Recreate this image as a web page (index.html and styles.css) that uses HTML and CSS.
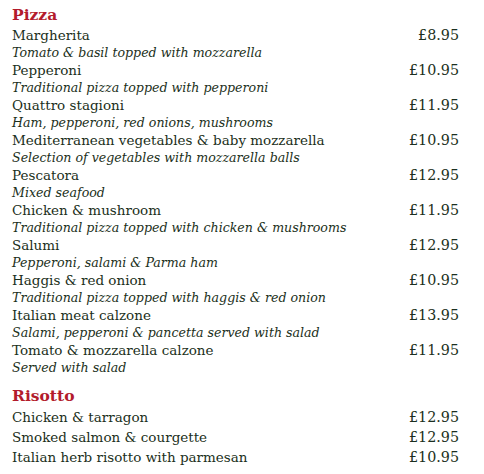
FILE: index.html
```html
<!DOCTYPE html>
<html lang="en">
<head>
<meta charset="utf-8">
<link rel="stylesheet" href="styles.css">
</head>
<body>
<div class="menu">
  <h2 class="section">Pizza</h2>
  <div class="item"><div class="row"><span class="name">Margherita</span><span class="price">£8.95</span></div><div class="desc">Tomato &amp; basil topped with mozzarella</div></div>
  <div class="item"><div class="row"><span class="name">Pepperoni</span><span class="price">£10.95</span></div><div class="desc">Traditional pizza topped with pepperoni</div></div>
  <div class="item"><div class="row"><span class="name">Quattro stagioni</span><span class="price">£11.95</span></div><div class="desc">Ham, pepperoni, red onions, mushrooms</div></div>
  <div class="item"><div class="row"><span class="name">Mediterranean vegetables &amp; baby mozzarella</span><span class="price">£10.95</span></div><div class="desc">Selection of vegetables with mozzarella balls</div></div>
  <div class="item"><div class="row"><span class="name">Pescatora</span><span class="price">£12.95</span></div><div class="desc">Mixed seafood</div></div>
  <div class="item"><div class="row"><span class="name">Chicken &amp; mushroom</span><span class="price">£11.95</span></div><div class="desc">Traditional pizza topped with chicken &amp; mushrooms</div></div>
  <div class="item"><div class="row"><span class="name">Salumi</span><span class="price">£12.95</span></div><div class="desc">Pepperoni, salami &amp; Parma ham</div></div>
  <div class="item"><div class="row"><span class="name">Haggis &amp; red onion</span><span class="price">£10.95</span></div><div class="desc">Traditional pizza topped with haggis &amp; red onion</div></div>
  <div class="item"><div class="row"><span class="name">Italian meat calzone</span><span class="price">£13.95</span></div><div class="desc">Salami, pepperoni &amp; pancetta served with salad</div></div>
  <div class="item"><div class="row"><span class="name">Tomato &amp; mozzarella calzone</span><span class="price">£11.95</span></div><div class="desc">Served with salad</div></div>

  <h2 class="section section-gap">Risotto</h2>
  <div class="row simple"><span class="name">Chicken &amp; tarragon</span><span class="price">£12.95</span></div>
  <div class="row simple"><span class="name">Smoked salmon &amp; courgette</span><span class="price">£12.95</span></div>
  <div class="row simple"><span class="name">Italian herb risotto with parmesan</span><span class="price">£10.95</span></div>
</div>
</body>
</html>
```
FILE: styles.css
```css
html, body {
  margin: 0;
  padding: 0;
  background: #ffffff;
}
.menu {
  padding: 5px 25px 0 12px;
  font-family: "DejaVu Serif", "Liberation Serif", serif;
  color: #1b2f20;
}
.section {
  margin: 0 0 1px;
  font-size: 15.5px;
  line-height: 20px;
  font-weight: bold;
  color: #b31b2c;
}
.section-gap {
  margin-top: 10px;
}
.item {
  display: flex;
  flex-direction: column;
}
.row {
  display: flex;
  justify-content: space-between;
  align-items: baseline;
  font-size: 13.5px;
  line-height: 18px;
}
.price {
  font-size: 14.3px;
}
.desc {
  font-style: italic;
  font-size: 12.6px;
  line-height: 17px;
}
.simple {
  line-height: 20px;
}
```
